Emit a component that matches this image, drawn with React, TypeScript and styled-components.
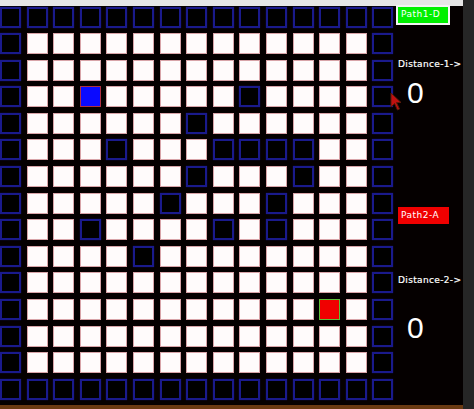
import React from "react";
import styled, { createGlobalStyle } from "styled-components";

const Global = createGlobalStyle`
  html, body { margin: 0; padding: 0; background: #000; }
  #root { width: 474px; height: 409px; overflow: hidden; }
`;

const Frame = styled.div`
  width: 474px;
  height: 409px;
  display: flex;
  background: #000;
  position: relative;
  overflow: hidden;
`;

const Main = styled.div`
  width: 463px;
  display: flex;
  flex-direction: column;
`;

const TopStrip = styled.div`
  height: 6px;
  background: #e6e6e6;
  flex: none;
`;

const Content = styled.div`
  display: flex;
  height: 399px;
  flex: none;
  background: #050000;
`;

const BottomStrip = styled.div`
  flex: 1;
  background: #6b3a12;
`;

const ScrollTrack = styled.div`
  width: 11px;
  background: #262626;
  flex: none;
`;

const Board = styled.div`
  display: grid;
  grid-template-columns: repeat(15, 21px);
  grid-auto-rows: 21px;
  column-gap: 5.6px;
  row-gap: 5.6px;
  padding-top: 0.5px;
  width: 394px;
  flex: none;
`;

type Kind = "open" | "wall" | "start" | "end";

const Cell = styled.div<{ $kind: Kind }>`
  box-sizing: border-box;
  width: 21px;
  height: 21px;
  background: ${(p) =>
    p.$kind === "wall" ? "#000" : p.$kind === "start" ? "#0a0aff" : p.$kind === "end" ? "#f00000" : "#fffbfb"};
  border: ${(p) =>
    p.$kind === "wall"
      ? "2px solid #1a1a8c"
      : p.$kind === "end"
      ? "1.5px solid #5fbf3a"
      : p.$kind === "start"
      ? "1px solid #b03040"
      : "1px solid #d8a4a8"};
  box-shadow: ${(p) => (p.$kind === "wall" ? "0 0 1px #14146a" : "none")};
`;

const Side = styled.div`
  display: flex;
  flex-direction: column;
  align-items: flex-start;
  padding-left: 2px;
  font-family: "DejaVu Sans", Verdana, sans-serif;
  color: #fff;
`;

const PathButton = styled.div<{ $bg: string; $framed?: boolean; $top: number }>`
  box-sizing: border-box;
  margin-top: ${(p) => p.$top}px;
  height: ${(p) => (p.$framed ? 20 : 17)}px;
  width: ${(p) => (p.$framed ? 54 : 51)}px;
  margin-left: ${(p) => (p.$framed ? 0 : 2)}px;
  background: ${(p) => p.$bg};
  border: ${(p) => (p.$framed ? "2px solid #f4f4f4" : "none")};
  font-size: 9px;
  letter-spacing: 0.5px;
  line-height: ${(p) => (p.$framed ? 15 : 17)}px;
  padding-left: 3px;
  color: #fff;
  white-space: nowrap;
`;

const Label = styled.div<{ $top: number }>`
  margin-top: ${(p) => p.$top}px;
  margin-left: 2px;
  font-size: 9px;
  letter-spacing: 0.35px;
  line-height: 12px;
  white-space: nowrap;
  -webkit-text-stroke: 0.2px #fff;
`;

const Value = styled.div<{ $top: number }>`
  margin-top: ${(p) => p.$top}px;
  margin-left: 11px;
  font-family: "Liberation Sans", Arial, sans-serif;
  font-size: 30px;
  line-height: 30px;
  color: #fff;
`;

const Cursor = styled.svg`
  position: absolute;
  left: 389px;
  top: 92px;
`;

const walls: Record<number, number[]> = {
  2: [8],
  3: [6],
  4: [3, 7, 8, 9, 10],
  5: [6, 10],
  6: [5, 9],
  7: [2, 7, 9],
  8: [4],
};

function kindAt(r: number, c: number): Kind {
  if (r === 0 || c === 0 || r === 14 || c === 14) return "wall";
  const ir = r - 1;
  const ic = c - 1;
  if (ir === 2 && ic === 2) return "start";
  if (ir === 10 && ic === 11) return "end";
  if (walls[ir]?.includes(ic)) return "wall";
  return "open";
}

export default function App() {
  const cells = [];
  for (let r = 0; r < 15; r++) {
    for (let c = 0; c < 15; c++) {
      cells.push(<Cell key={`${r}-${c}`} $kind={kindAt(r, c)} />);
    }
  }
  return (
    <>
      <Global />
      <Frame>
        <Main>
          <TopStrip />
          <Content>
            <Board>{cells}</Board>
            <Side>
              <PathButton $bg="#00f000" $framed $top={-1}>
                Path1-D
              </PathButton>
              <Label $top={33}>Distance-1-&gt;</Label>
              <Value $top={8}>0</Value>
              <PathButton $bg="#f00000" $top={99}>
                Path2-A
              </PathButton>
              <Label $top={50}>Distance-2-&gt;</Label>
              <Value $top={27}>0</Value>
            </Side>
          </Content>
          <BottomStrip />
        </Main>
        <ScrollTrack />
        <Cursor width="14" height="20" viewBox="0 0 14 20">
          <path d="M2 1 L2 15 L5.5 11.5 L8.5 18 L10.5 17 L7.5 10.5 L12 10.5 Z" fill="#c01010" stroke="#5a1a0a" strokeWidth="1" />
        </Cursor>
      </Frame>
    </>
  );
}
